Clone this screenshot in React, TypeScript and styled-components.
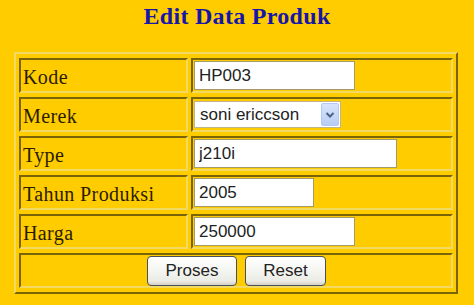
import styled, { createGlobalStyle } from "styled-components";

const GlobalStyle = createGlobalStyle`
  body {
    margin: 0;
    background: #ffcc00;
  }
`;

const Page = styled.div`
  width: 474px;
  height: 305px;
  background: #ffcc00;
  overflow: hidden;
`;

const Title = styled.h1`
  margin: 0;
  height: 52px;
  padding-top: 3px;
  box-sizing: border-box;
  text-align: center;
  font-family: "Liberation Serif", serif;
  font-size: 24px;
  letter-spacing: 0.3px;
  font-weight: bold;
  color: #1616a8;
`;

const FormTable = styled.table`
  margin-left: 14px;
  width: 444px;
  border-collapse: separate;
  border-spacing: 3px 4px;
  border-style: solid;
  border-width: 2px;
  border-color: #f2da62 #7a6408 #7a6408 #f2da62;
`;

const Cell = styled.td<{ $label?: boolean; $center?: boolean }>`
  height: 35px;
  box-sizing: border-box;
  padding: ${(p) => (p.$label ? "3px 0 0 2px" : "0 0 0 1px")};
  width: ${(p) => (p.$label ? "169px" : "auto")};
  vertical-align: middle;
  text-align: ${(p) => (p.$center ? "center" : "left")};
  border-style: solid;
  border-width: 2px;
  border-color: #7a6408 #f2da62 #f2da62 #7a6408;
  font-family: "Liberation Serif", serif;
  font-size: 20px;
  letter-spacing: 0.4px;
  color: #2a1c00;
`;

const TextInput = styled.input<{ $w: number }>`
  width: ${(p) => p.$w}px;
  height: 29px;
  box-sizing: border-box;
  border: 1px solid #a49a6a;
  background: #fff;
  padding: 0 4px;
  font-family: "Liberation Sans", Arial, sans-serif;
  font-size: 17px;
  color: #222;
  outline: none;
  display: block;
`;

const SelectBox = styled.div`
  display: flex;
  align-items: center;
  width: 147px;
  height: 27px;
  box-sizing: border-box;
  border: 1px solid #bfb48a;
  background: #fff;
  padding: 1px;
`;

const Select = styled.select`
  appearance: none;
  flex: 1;
  min-width: 0;
  height: 100%;
  border: none;
  background: transparent;
  padding: 0 0 0 4px;
  font-family: "Liberation Sans", Arial, sans-serif;
  font-size: 17px;
  color: #222;
  outline: none;
`;

const ArrowButton = styled.span`
  width: 18px;
  height: 100%;
  display: flex;
  align-items: center;
  justify-content: center;
  border-radius: 2px;
  border: 1px solid #b5c8f2;
  box-sizing: border-box;
  background: linear-gradient(#d8e4fb, #b8cdf5);
`;

const ButtonRow = styled.div`
  display: flex;
  justify-content: center;
  gap: 8px;
  padding-top: 1px;
`;

const Button = styled.button<{ $w: number }>`
  width: ${(p) => p.$w}px;
  height: 30px;
  border: 1px solid #4a5058;
  border-radius: 4px;
  background: linear-gradient(#ffffff, #ececE6 85%, #d6d0c4);
  font-family: "Liberation Sans", Arial, sans-serif;
  font-size: 17px;
  color: #222;
  padding: 0;
`;

const rows = [
  { label: "Kode", value: "HP003", w: 161 },
  { label: "Merek", select: true },
  { label: "Type", value: "j210i", w: 203 },
  { label: "Tahun Produksi", value: "2005", w: 120 },
  { label: "Harga", value: "250000", w: 161 },
];

export default function App() {
  return (
    <Page>
      <GlobalStyle />
      <Title>Edit Data Produk</Title>
      <FormTable>
        <tbody>
          {rows.map((r) => (
            <tr key={r.label}>
              <Cell $label>{r.label}</Cell>
              <Cell>
                {r.select ? (
                  <SelectBox>
                    <Select defaultValue="soni ericcson">
                      <option>soni ericcson</option>
                      <option>nokia</option>
                      <option>samsung</option>
                    </Select>
                    <ArrowButton>
                      <svg width="10" height="8" viewBox="0 0 10 8">
                        <path d="M1.5 2 L5 5.5 L8.5 2" fill="none" stroke="#4d6185" strokeWidth="2" />
                      </svg>
                    </ArrowButton>
                  </SelectBox>
                ) : (
                  <TextInput $w={r.w!} defaultValue={r.value} />
                )}
              </Cell>
            </tr>
          ))}
          <tr>
            <Cell colSpan={2} $center>
              <ButtonRow>
                <Button $w={90}>Proses</Button>
                <Button $w={81}>Reset</Button>
              </ButtonRow>
            </Cell>
          </tr>
        </tbody>
      </FormTable>
    </Page>
  );
}
